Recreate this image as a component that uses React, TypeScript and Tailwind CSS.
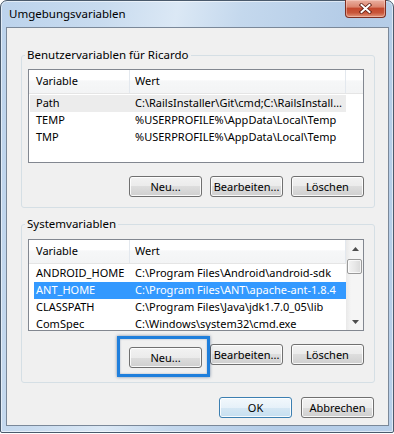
import type { ReactNode } from 'react';

type Row = { name: string; value: string; state?: 'selected' | 'hover' };

const USER_VARS: Row[] = [
    { name: 'Path', value: 'C:\\RailsInstaller\\Git\\cmd;C:\\RailsInstaller\\Ruby1.9.3\\bin', state: 'hover' },
    { name: 'TEMP', value: '%USERPROFILE%\\AppData\\Local\\Temp' },
    { name: 'TMP', value: '%USERPROFILE%\\AppData\\Local\\Temp' },
];

const SYSTEM_VARS: Row[] = [
    { name: 'ANDROID_HOME', value: 'C:\\Program Files\\Android\\android-sdk' },
    { name: 'ANT_HOME', value: 'C:\\Program Files\\ANT\\apache-ant-1.8.4', state: 'selected' },
    { name: 'CLASSPATH', value: 'C:\\Program Files\\Java\\jdk1.7.0_05\\lib' },
    { name: 'ComSpec', value: 'C:\\Windows\\system32\\cmd.exe' },
];

function Knopf({ children, primary }: { children: ReactNode; primary?: boolean }) {
    return (
        <button
            className={`h-[21px] w-[73px] rounded-[3px] border text-[11px] leading-none text-black shadow-[inset_0_0_0_1px_rgba(255,255,255,0.85)] ${
                primary
                    ? 'border-[#3c7fb1] bg-[linear-gradient(#f2f8fc_0%,#e6f1f9_50%,#d5e7f4_50%,#c6dff0_100%)]'
                    : 'border-[#707070] bg-[linear-gradient(#f2f2f2_0%,#ebebeb_50%,#dddddd_50%,#cfcfcf_100%)]'
            }`}
        >
            {children}
        </button>
    );
}

function Scrollbar() {
    return (
        <div className="flex w-[17px] flex-col items-center bg-[linear-gradient(90deg,#e9e9e9,#f5f5f5_30%,#f5f5f5)] pt-[7px]">
            <svg width="7" height="4" viewBox="0 0 7 4" className="ml-[1px]">
                <path d="M0 4 L3.5 0 L7 4 Z" fill="#4d4d4d" />
            </svg>
            <div className="mt-[8px] h-[15px] w-[15px] rounded-[2px] border border-[#9a9a9a] bg-[linear-gradient(90deg,#f4f4f4,#e8e8e8_50%,#d9d9d9)] shadow-[inset_0_0_0_1px_rgba(255,255,255,0.7)]" />
            <div className="flex-1" />
            <svg width="7" height="4" viewBox="0 0 7 4" className="mb-[6px] ml-[1px]">
                <path d="M0 0 L3.5 4 L7 0 Z" fill="#4d4d4d" />
            </svg>
        </div>
    );
}

function Liste({ rows, height, scroll }: { rows: Row[]; height: string; scroll?: boolean }) {
    return (
        <div className={`ml-[6px] flex w-[336px] overflow-hidden border border-[#828790] bg-white ${height}`}>
            <div className="flex w-[317px] flex-col">
                {/* Kopfzeile */}
                <div className="flex h-[24px] shrink-0 items-center border-b border-[#e5e5e5] bg-[linear-gradient(#ffffff_0%,#ffffff_45%,#f6f7f8_46%,#f3f4f5_100%)] text-[11px]">
                    <div className="flex h-full w-[101px] items-center border-r border-[#e3e8ee] pl-[7px] text-black">Variable</div>
                    <div className="flex h-full w-[216px] items-center border-r border-[#e3e8ee] pl-[5px] text-black">Wert</div>
                </div>
                <div className="pt-[1px]">
                    {rows.map((r) => (
                        <div
                            key={r.name}
                            className={`flex h-[17px] items-center whitespace-nowrap text-[11px] ${
                                r.state === 'selected'
                                    ? 'ml-[5px] bg-[#3399ff] text-white'
                                    : r.state === 'hover'
                                    ? 'ml-[1px] bg-[#ececec] text-black'
                                    : 'text-black'
                            }`}
                        >
                            <div
                                className={`shrink-0 ${
                                    r.state === 'selected' ? 'w-[96px] pl-[2px]' : r.state === 'hover' ? 'w-[100px] pl-[6px]' : 'w-[101px] pl-[7px]'
                                }`}
                            >
                                {r.name}
                            </div>
                            <div className="min-w-0 flex-1 truncate pl-[5px] pr-[4px]">{r.value}</div>
                        </div>
                    ))}
                </div>
            </div>
            {scroll ? (
                <Scrollbar />
            ) : (
                <div className="h-[24px] flex-1 border-b border-[#e5e5e5] bg-[linear-gradient(#ffffff_0%,#ffffff_45%,#f6f7f8_46%,#f3f4f5_100%)]" />
            )}
        </div>
    );
}

export default function App() {
    return (
        <div className="h-[434px] w-[394px] bg-white font-['Segoe_UI','Noto_Sans',sans-serif]">
            <div className="flex h-[433px] w-[394px] flex-col rounded-t-[7px] rounded-b-[2px] border border-[#4a5a6c] bg-[linear-gradient(100deg,#bcd3ec_0%,#c8dbef_22%,#dbe8f5_38%,#c4d8ed_52%,#b4cce7_75%,#b8cfe9_100%)] pb-[6px] pl-[5px] pr-[4px] shadow-[inset_0_0_0_1px_rgba(255,255,255,0.55)]">
                {/* Titelleiste */}
                <div className="flex h-[26px] shrink-0 items-start justify-between">
                    <span className="mt-[5px] pl-[3px] text-[11.5px] leading-[16px] text-black">Umgebungsvariablen</span>
                    <div className="-mt-[1px] mr-[3px] flex h-[18px] w-[41px] items-center justify-center rounded-b-[4px] border border-t-0 border-[#7e2f22] bg-[linear-gradient(#eab0a1_0%,#dc8670_40%,#c4492f_50%,#c85539_75%,#e2967c_100%)] shadow-[inset_0_0_0_1px_rgba(255,220,210,0.45)]">
                        <svg width="13" height="11" viewBox="0 0 13 11">
                            <path d="M2.5 2 L10.5 9 M10.5 2 L2.5 9" stroke="#5b1a10" strokeWidth="3.6" strokeLinecap="square" />
                            <path d="M2.5 2 L10.5 9 M10.5 2 L2.5 9" stroke="#ffffff" strokeWidth="2" strokeLinecap="square" />
                        </svg>
                    </div>
                </div>

                {/* Inhalt */}
                <div className="flex flex-1 flex-col border border-[#7a8899] bg-[#f0f0f0] pl-[14px] pr-[13px] pt-[19px] text-black">
                    <fieldset className="rounded-[3px] border border-[#d5dfe5]">
                        <legend className="ml-[3px] px-[2px] text-[11.5px] leading-[16px]">Benutzervariablen für Ricardo</legend>
                        <div className="mt-[6px]">
                            <Liste rows={USER_VARS} height="h-[94px]" />
                        </div>
                        <div className="mt-[13px] flex justify-end gap-[8px] pb-[10px] pr-[10px]">
                            <Knopf>Neu...</Knopf>
                            <Knopf>Bearbeiten...</Knopf>
                            <Knopf>Löschen</Knopf>
                        </div>
                    </fieldset>

                    <fieldset className="mt-[8px] rounded-[3px] border border-[#d5dfe5]">
                        <legend className="ml-[3px] px-[2px] text-[11.5px] leading-[16px]">Systemvariablen</legend>
                        <div className="mt-[7px]">
                            <Liste rows={SYSTEM_VARS} height="h-[92px]" scroll />
                        </div>
                        <div className="mt-[13px] flex justify-end gap-[8px] pb-[14px] pr-[10px]">
                            <div className="relative">
                                <Knopf>Neu...</Knopf>
                                {/* Markierung */}
                                <div className="pointer-events-none absolute -bottom-[9px] -left-[12px] -right-[8px] -top-[8px] border-[3px] border-[#1f7fdc] shadow-[0_0_3px_rgba(0,40,90,0.5),inset_0_0_2px_rgba(0,40,90,0.35)]" />
                            </div>
                            <Knopf>Bearbeiten...</Knopf>
                            <Knopf>Löschen</Knopf>
                        </div>
                    </fieldset>

                    <div className="mr-[1px] mt-[14px] flex justify-end gap-[9px]">
                        <Knopf primary>OK</Knopf>
                        <Knopf>Abbrechen</Knopf>
                    </div>
                </div>
            </div>
        </div>
    );
}
